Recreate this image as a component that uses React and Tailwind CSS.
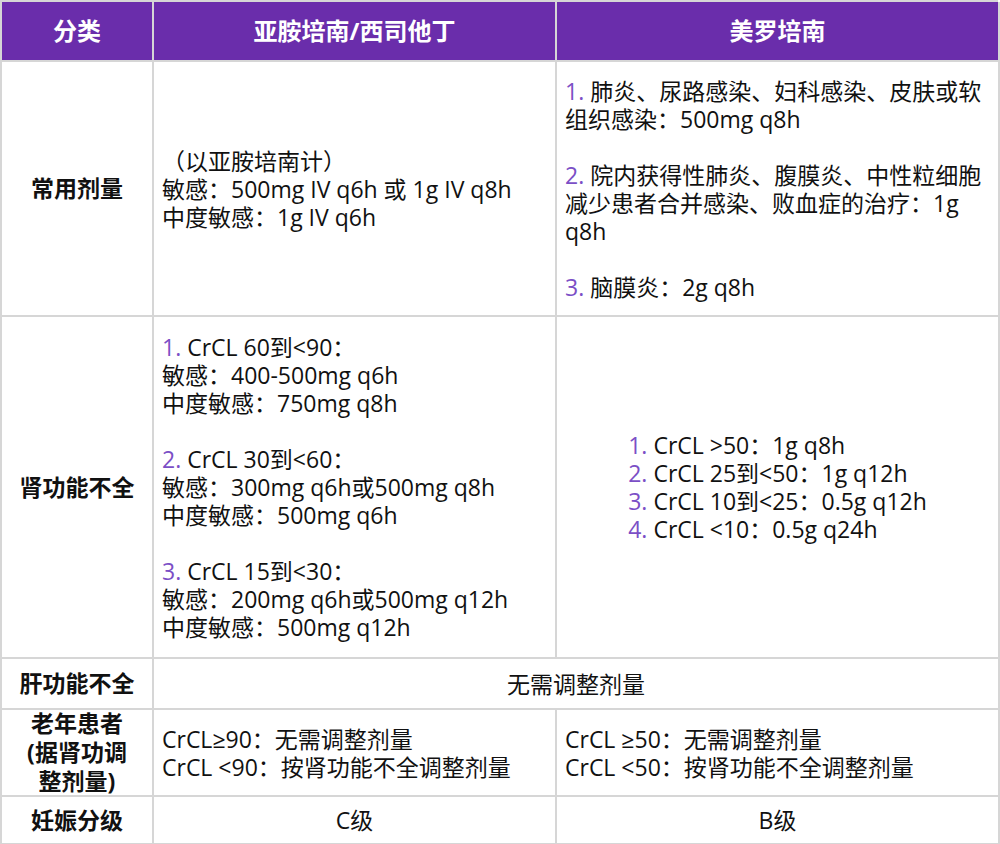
import React from "react";

const font = { fontFamily: '"Open Sans", "Noto Sans CJK SC", sans-serif' };

const Num = ({ n }) => <span className="text-[#7b4fc6]">{n}. </span>;

const Cell = ({ className = "", children }) => (
  <div className={`border-r-2 border-b-2 border-[#d6d6d6] ${className}`}>{children}</div>
);

const Head = ({ children }) => (
  <Cell className="flex items-center justify-center bg-[#6a2dab] text-white font-bold text-[24px] border-[#8b63c4]">
    {children}
  </Cell>
);

const Label = ({ children }) => (
  <Cell className="flex items-center justify-center text-center font-bold leading-[29px]">{children}</Cell>
);

export default function App() {
  return (
    <div className="bg-white w-[1000px] h-[844px] text-[#111] text-[23px] leading-[28px]" style={font}>
      <div className="grid grid-cols-[152px_403px_443px] grid-rows-[60px_255px_342px_51px_87px_48px] border-l-2 border-t-2 border-[#d6d6d6] w-[998px]">
        <Head>分类</Head>
        <Head>亚胺培南/西司他丁</Head>
        <Head>美罗培南</Head>

        <Label>常用剂量</Label>
        <Cell className="flex flex-col justify-center px-2">
          <div>（以亚胺培南计）</div>
          <div>敏感：500mg IV q6h 或 1g IV q8h</div>
          <div>中度敏感：1g IV q6h</div>
        </Cell>
        <Cell className="flex flex-col justify-center px-2 whitespace-nowrap">
          <div><Num n="1" />肺炎、尿路感染、妇科感染、皮肤或软</div>
          <div>组织感染：500mg q8h</div>
          <div>&nbsp;</div>
          <div><Num n="2" />院内获得性肺炎、腹膜炎、中性粒细胞</div>
          <div>减少患者合并感染、败血症的治疗：1g</div>
          <div>q8h</div>
          <div>&nbsp;</div>
          <div><Num n="3" />脑膜炎：2g q8h</div>
        </Cell>

        <Label>肾功能不全</Label>
        <Cell className="flex flex-col justify-center px-2">
          <div><Num n="1" />CrCL 60到&lt;90：</div>
          <div>敏感：400-500mg q6h</div>
          <div>中度敏感：750mg q8h</div>
          <div>&nbsp;</div>
          <div><Num n="2" />CrCL 30到&lt;60：</div>
          <div>敏感：300mg q6h或500mg q8h</div>
          <div>中度敏感：500mg q6h</div>
          <div>&nbsp;</div>
          <div><Num n="3" />CrCL 15到&lt;30：</div>
          <div>敏感：200mg q6h或500mg q12h</div>
          <div>中度敏感：500mg q12h</div>
        </Cell>
        <Cell className="flex items-center justify-center">
          <div>
            <div><Num n="1" />CrCL &gt;50：1g q8h</div>
            <div><Num n="2" />CrCL 25到&lt;50：1g q12h</div>
            <div><Num n="3" />CrCL 10到&lt;25：0.5g q12h</div>
            <div><Num n="4" />CrCL &lt;10：0.5g q24h</div>
          </div>
        </Cell>

        <Label>肝功能不全</Label>
        <Cell className="col-span-2 flex items-center justify-center">无需调整剂量</Cell>

        <Label>
          <div>
            老年患者
            <br />
            (据肾功调
            <br />
            整剂量)
          </div>
        </Label>
        <Cell className="flex flex-col justify-center px-2">
          <div>CrCL≥90：无需调整剂量</div>
          <div>CrCL &lt;90：按肾功能不全调整剂量</div>
        </Cell>
        <Cell className="flex flex-col justify-center px-2">
          <div>CrCL ≥50：无需调整剂量</div>
          <div>CrCL &lt;50：按肾功能不全调整剂量</div>
        </Cell>

        <Label>妊娠分级</Label>
        <Cell className="flex items-center justify-center">C级</Cell>
        <Cell className="flex items-center justify-center">B级</Cell>
      </div>
    </div>
  );
}
